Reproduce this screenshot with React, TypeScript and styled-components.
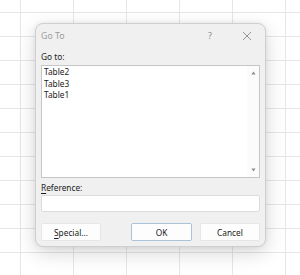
import React from "react"
import styled, { createGlobalStyle } from "styled-components"

const GlobalStyle = createGlobalStyle`
	html, body {
		margin: 0;
		padding: 0;
		background: #ffffff;
	}

	body {
		font-family: "Noto Sans", "Open Sans", sans-serif;
		-webkit-font-smoothing: antialiased;
	}
`

const SheetElement = styled.div`
	width: 300px;
	height: 275px;
	box-sizing: border-box;
	padding: 23px 0 0 35px;
	overflow: hidden;
	background-color: #ffffff;
	background-image:
		linear-gradient(to right, #e6e6e6 1px, transparent 1px),
		linear-gradient(to bottom, #e6e6e6 1px, transparent 1px);
	background-size: 53px 100%, 100% 24px;
	background-position: 20px 0, 0 12px;
`

const DialogElement = styled.div`
	width: 231px;
	height: 224px;
	box-sizing: border-box;
	display: flex;
	flex-direction: column;
	background: #f0f0f0;
	border: 1px solid #cfcfcf;
	border-radius: 8px;
	box-shadow: 0 6px 20px rgba(0, 0, 0, 0.16), 0 0 5px rgba(0, 0, 0, 0.07);
	color: #1b1b1b;
	font-size: 8.3px;
`

const TitleBarElement = styled.div`
	height: 23px;
	display: flex;
	flex-direction: row;
	align-items: center;
	padding-left: 5px;
`

const TitleTextElement = styled.span`
	color: #9c9c9c;
	font-size: 8.8px;
`

const TitleSpacerElement = styled.div`
	flex-grow: 1;
`

const TitleButtonElement = styled.div<{ $width: number }>`
	width: ${props => props.$width}px;
	height: 23px;
	display: flex;
	align-items: center;
	justify-content: center;
	color: #8a8a8a;
	font-size: 9px;
`

const BodyElement = styled.div`
	display: flex;
	flex-direction: column;
	padding: 4px 5px 6px 5px;
	flex-grow: 1;
`

const LabelElement = styled.div<{ $top?: number, $gap: number }>`
	height: 12px;
	line-height: 12px;
	margin-top: ${props => props.$top ?? 0}px;
	margin-bottom: ${props => props.$gap}px;
	white-space: nowrap;

	u {
		text-decoration-thickness: 1px;
		text-underline-offset: 1.5px;
	}
`

const ListBoxElement = styled.div`
	height: 113px;
	box-sizing: border-box;
	display: flex;
	flex-direction: row;
	background: #ffffff;
	border: 1px solid #c6c6c6;
`

const ListItemsElement = styled.div`
	flex-grow: 1;
	display: flex;
	flex-direction: column;
	padding-left: 2px;
`

const ListItemElement = styled.div`
	height: 11.6px;
	line-height: 11.6px;
	white-space: nowrap;
`

const ScrollBarElement = styled.div`
	width: 12px;
	display: flex;
	flex-direction: column;
	align-items: center;
	justify-content: space-between;
	padding: 5px 0 5px 0;
	background: #fbfbfb;
`

const ScrollArrowElement = styled.svg`
	width: 5px;
	height: 4px;
	display: block;
`

const InputElement = styled.div`
	height: 17px;
	box-sizing: border-box;
	background: #ffffff;
	border: 1px solid #dcdcdc;
	border-radius: 2px;
`

const ButtonRowElement = styled.div`
	margin-top: 11px;
	display: flex;
	flex-direction: row;
	align-items: center;
`

const ButtonElement = styled.div<{ $width: number, $default?: boolean, $gap?: number }>`
	width: ${props => props.$width}px;
	height: 18px;
	box-sizing: border-box;
	margin-left: ${props => props.$gap ?? 0}px;
	display: flex;
	align-items: center;
	justify-content: center;
	background: #fdfdfd;
	border: 1px solid ${props => props.$default ? "#a9c3da" : "#e6e6e6"};
	border-radius: 2px;
	white-space: nowrap;

	u {
		text-decoration-thickness: 1px;
		text-underline-offset: 1.5px;
	}
`

const ButtonSpacerElement = styled.div`
	flex-grow: 1;
`

function CloseIcon() {
	return (
		<svg width="10" height="10" viewBox="0 0 10 10">
			<path d="M1 1 L9 9 M9 1 L1 9" stroke="#8c8c8c" strokeWidth="0.9" fill="none" />
		</svg>
	)
}

function ScrollArrow({ up }: { up: boolean }) {
	return (
		<ScrollArrowElement viewBox="0 0 5 4">
			<path d={up ? "M2.5 0.5 L4.6 3.5 L0.4 3.5 Z" : "M0.4 0.5 L4.6 0.5 L2.5 3.5 Z"} fill="#8e8e8e" />
		</ScrollArrowElement>
	)
}

const tables = ["Table2", "Table3", "Table1"]

function App() {
	return (
		<>
			<GlobalStyle />
			<SheetElement>
				<DialogElement>
					<TitleBarElement>
						<TitleTextElement>Go To</TitleTextElement>
						<TitleSpacerElement />
						<TitleButtonElement $width={38}>?</TitleButtonElement>
						<TitleButtonElement $width={36}><CloseIcon /></TitleButtonElement>
					</TitleBarElement>
					<BodyElement>
						<LabelElement $gap={2}>Go to:</LabelElement>
						<ListBoxElement>
							<ListItemsElement>
								{tables.map(name => <ListItemElement key={name}>{name}</ListItemElement>)}
							</ListItemsElement>
							<ScrollBarElement>
								<ScrollArrow up={true} />
								<ScrollArrow up={false} />
							</ScrollBarElement>
						</ListBoxElement>
						<LabelElement $top={4} $gap={1}><u>R</u>eference:</LabelElement>
						<InputElement />
						<ButtonRowElement>
							<ButtonElement $width={60}><u>S</u>pecial...</ButtonElement>
							<ButtonSpacerElement />
							<ButtonElement $width={61} $default={true}>OK</ButtonElement>
							<ButtonElement $width={60} $gap={8}>Cancel</ButtonElement>
						</ButtonRowElement>
					</BodyElement>
				</DialogElement>
			</SheetElement>
		</>
	)
}

export default App
